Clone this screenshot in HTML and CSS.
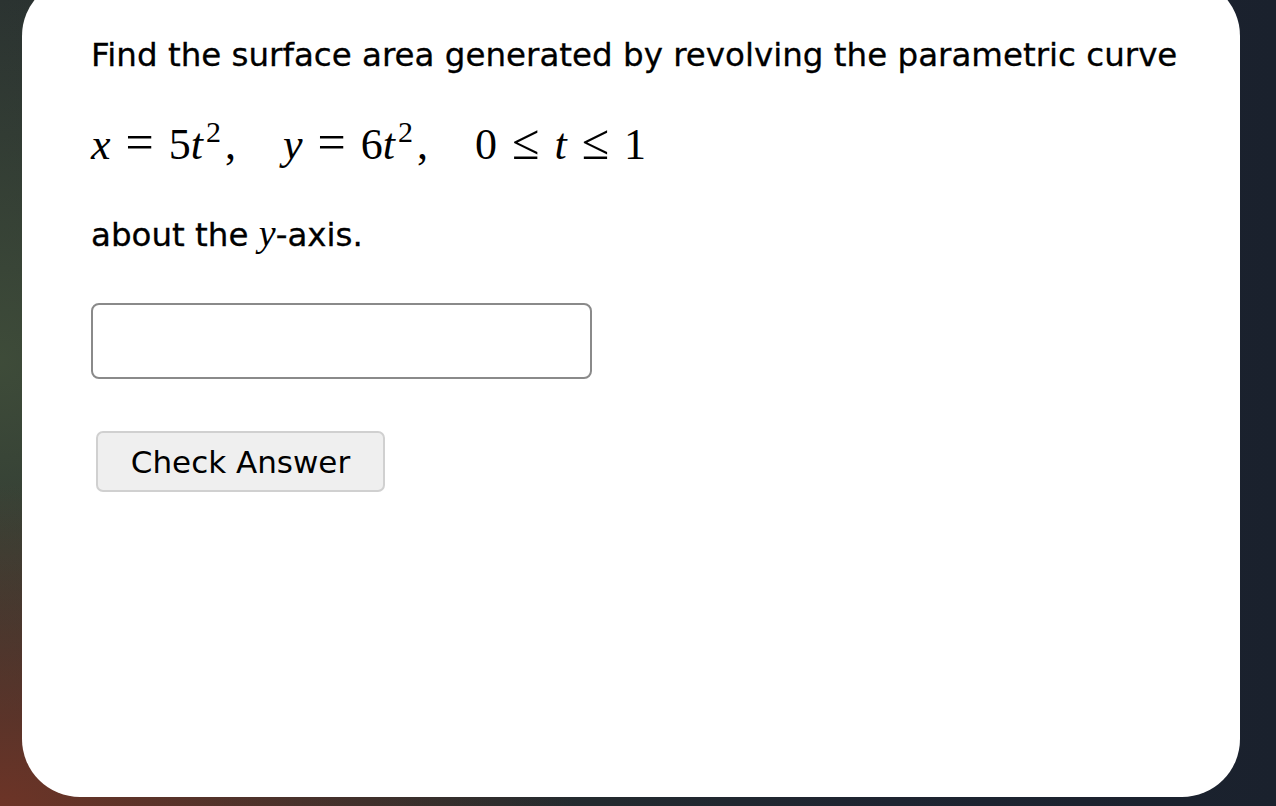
FILE: index.html
```html
<!DOCTYPE html>
<html lang="en">
<head>
  <meta charset="UTF-8" />
  <title>Surface Area</title>
  <link rel="stylesheet" href="styles.css">
</head>
<body>
  <div class="card">
    <p class="question">Find the surface area generated by revolving the parametric curve</p>
    <div class="math">
      <span class="mi">x</span><span class="mo">=</span>5<span class="mi">t</span><sup>2</sup><span class="punct">,</span><span class="quad"></span>
      <span class="mi">y</span><span class="mo">=</span>6<span class="mi">t</span><sup>2</sup><span class="punct">,</span><span class="quad"></span>
      0<span class="mo">≤</span><span class="mi">t</span><span class="mo">≤</span>1
    </div>
    <p class="question">about the <span class="mi">y</span>-axis.</p>
    <input class="answer" type="text" />
    <button class="check">Check Answer</button>
  </div>
</body>
</html>
```

FILE: styles.css
```css
html, body {
  height: 100%;
}
body {
  margin: 0;
  overflow: hidden;
  font-family: 'DejaVu Sans', 'Liberation Sans', sans-serif;
  background:
    radial-gradient(ellipse 45% 40% at 0% 100%, rgba(112, 52, 38, 0.95), rgba(112, 52, 38, 0) 100%),
    radial-gradient(ellipse 30% 45% at 0% 45%, rgba(64, 78, 58, 0.9), rgba(64, 78, 58, 0) 100%),
    linear-gradient(to right, #2b3331 0%, #262d2e 35%, #1e2431 70%, #1a212d 100%);
}
.card {
  box-sizing: border-box;
  width: 1218px;
  height: 819px;
  margin: -22px 0 0 22px;
  padding: 57px 0 0 69px;
  background: #fff;
  border-radius: 58px;
  display: flex;
  flex-direction: column;
  align-items: flex-start;
}
.question {
  margin: 0;
  font-size: 32.5px;
  line-height: 40px;
  color: #000;
  white-space: nowrap;
  -webkit-text-stroke: 0.3px #000;
}
.math {
  margin: 46px 0 46px;
  font-family: 'Liberation Serif', 'DejaVu Serif', serif;
  font-size: 44px;
  line-height: 48px;
  color: #000;
  white-space: nowrap;
}
.mi {
  font-family: 'Liberation Serif', 'DejaVu Serif', serif;
  font-style: italic;
}
.question .mi {
  font-size: 38px;
  line-height: 0;
  -webkit-text-stroke: 0;
}
.mo {
  margin: 0 15px;
  font-size: 50px;
  line-height: 0;
}
.math sup {
  font-size: 30px;
  line-height: 0;
  vertical-align: 17px;
  margin-left: 3px;
}
.punct {
  margin-left: 4px;
}
.quad {
  display: inline-block;
  width: 36px;
}
.answer {
  box-sizing: border-box;
  width: 501px;
  height: 76px;
  margin: 48px 0 0;
  border: 2px solid #8a8a8a;
  border-radius: 8px;
  background: #fff;
}
.check {
  box-sizing: border-box;
  width: 289px;
  height: 61px;
  margin: 52px 0 0 5px;
  padding: 0;
  font-family: 'DejaVu Sans', 'Liberation Sans', sans-serif;
  font-size: 31px;
  color: #000;
  background: #efefef;
  border: 2px solid #d0d0d0;
  border-radius: 7px;
}
```
